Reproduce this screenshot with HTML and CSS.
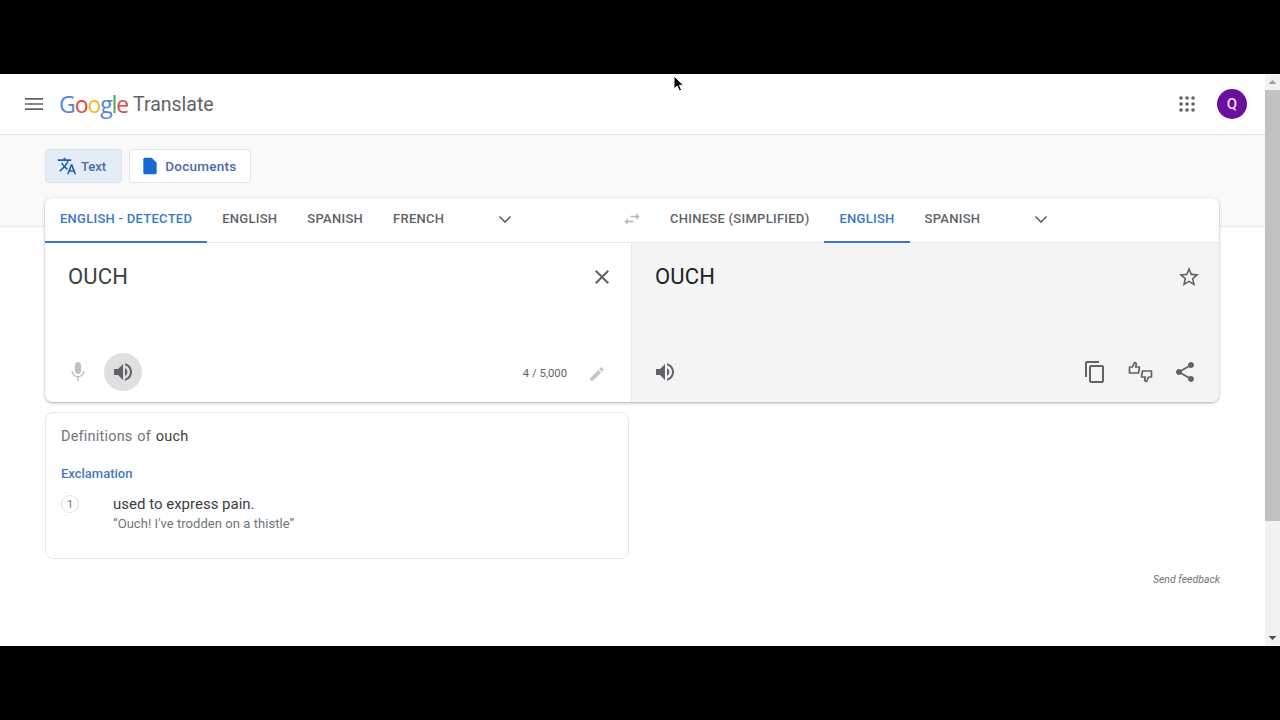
FILE: index.html
```html
<!DOCTYPE html>
<html lang="en">
<head>
<meta charset="utf-8">
<title>Google Translate</title>
<link rel="stylesheet" href="styles.css">
</head>
<body>
<div class="letterbox"></div>
<div class="viewport">
  <div class="page">
    <header class="topbar">
      <div class="brand">
        <svg class="menu" width="24" height="24" viewBox="0 0 24 24"><path d="M3 18h18v-1.700H3V18zm0-5.150h18v-1.700H3v1.700zM3 6v1.700h18V6H3z" fill="#5f6368"/></svg>
        <span class="logo"><span class="g-b">G</span><span class="g-r">o</span><span class="g-y">o</span><span class="g-b">g</span><span class="g-g">l</span><span class="g-r">e</span></span>
        <span class="product">Translate</span>
      </div>
      <div class="account">
        <svg width="24" height="24" viewBox="0 0 24 24" fill="#5f6368"><circle cx="6" cy="6" r="1.800"/><circle cx="12" cy="6" r="1.800"/><circle cx="18" cy="6" r="1.800"/><circle cx="6" cy="12" r="1.800"/><circle cx="12" cy="12" r="1.800"/><circle cx="18" cy="12" r="1.800"/><circle cx="6" cy="18" r="1.800"/><circle cx="12" cy="18" r="1.800"/><circle cx="18" cy="18" r="1.800"/></svg>
        <span class="avatar">Q</span>
      </div>
    </header>
    <main class="main">
      <nav class="modes">
        <button class="mode mode-on">
          <svg width="20" height="20" viewBox="0 0 24 24" fill="#1a5fb4"><path d="M12.87 15.07l-2.54-2.51.03-.03A17.52 17.52 0 0 0 14.07 6H17V4h-7V2H8v2H1v2h11.17C11.5 7.92 10.44 9.75 9 11.35 8.07 10.32 7.3 9.19 6.69 8h-2c.73 1.63 1.73 3.17 2.98 4.56l-5.09 5.02L4 19l5-5 3.11 3.11.76-2.04zM18.5 10h-2L12 22h2l1.12-3h4.75L21 22h2l-4.5-12zm-2.62 7l1.62-4.33L19.12 17h-3.24z"/></svg>
          Text
        </button>
        <button class="mode mode-doc">
          <svg width="20" height="20" viewBox="0 0 24 24" fill="#1967d2"><path d="M14 2H6c-1.1 0-2 .9-2 2v16c0 1.1.9 2 2 2h12c1.1 0 2-.9 2-2V8l-6-6z"/></svg>
          Documents
        </button>
      </nav>

      <section class="translator">
        <div class="tabs">
          <div class="tabset tabset-source">
            <span class="tab tab-on">ENGLISH - DETECTED</span>
            <span class="tab">ENGLISH</span>
            <span class="tab">SPANISH</span>
            <span class="tab">FRENCH</span>
            <svg class="chev chev-source" width="24" height="24" viewBox="0 0 24 24"><path d="M6.500 9.500L12 15l5.500-5.500" fill="none" stroke="#5f6368" stroke-width="1.600"/></svg>
          </div>
          <svg class="swap" width="20" height="20" viewBox="0 0 24 24" fill="#b4b6b8"><path d="M6.990 11L3 15l3.990 4v-3H14v-2H6.990v-3zM21 9l-3.990-4v3H10v2h7.010v3L21 9z"/></svg>
          <div class="tabset tabset-target">
            <span class="tab">CHINESE (SIMPLIFIED)</span>
            <span class="tab tab-on">ENGLISH</span>
            <span class="tab">SPANISH</span>
            <svg class="chev chev-target" width="24" height="24" viewBox="0 0 24 24"><path d="M6.500 9.500L12 15l5.500-5.500" fill="none" stroke="#5f6368" stroke-width="1.600"/></svg>
          </div>
        </div>
        <div class="panes">
          <div class="pane pane-source">
            <div class="pane-top">
              <span class="phrase phrase-source">OUCH</span>
              <svg class="clear" width="24" height="24" viewBox="0 0 24 24" fill="#5f6368"><path d="M19 6.410L17.590 5 12 10.590 6.410 5 5 6.410 10.590 12 5 17.590 6.410 19 12 13.410 17.590 19 19 17.590 13.410 12z"/></svg>
            </div>
            <div class="pane-bottom">
              <svg class="mic" width="24" height="24" viewBox="0 0 24 24" fill="#bdc1c6"><path d="M12 14c1.660 0 3-1.340 3-3V5c0-1.660-1.340-3-3-3S9 3.340 9 5v6c0 1.660 1.340 3 3 3z"/><path d="M17 11c0 2.760-2.240 5-5 5s-5-2.240-5-5H5.500c0 3.100 2.400 5.700 5.750 6.200V21h1.500v-3.800c3.350-.5 5.750-3.100 5.750-6.200H17z"/></svg>
              <span class="speak-on">
                <svg width="24" height="24" viewBox="0 0 24 24" fill="#5f6368"><path d="M3 9v6h4l5 5V4L7 9H3z"/><path d="M16.500 12A4.500 4.500 0 0 0 14 7.970v8.050A4.470 4.470 0 0 0 16.500 12z"/><path d="M14 3.230v2.060c2.890.86 5 3.540 5 6.710s-2.110 5.850-5 6.710v2.060c4.010-.91 7-4.490 7-8.770s-2.990-7.860-7-8.770z"/></svg>
              </span>
              <span class="counter">4 / 5,000</span>
              <svg class="pencil" width="18" height="18" viewBox="0 0 24 24" fill="#c4c6c8"><path d="M3 17.250V21h3.750L17.810 9.940l-3.750-3.750L3 17.250zM20.710 7.040a1 1 0 0 0 0-1.410l-2.340-2.340a1 1 0 0 0-1.410 0l-1.830 1.830 3.750 3.750 1.830-1.830z"/></svg>
            </div>
          </div>
          <div class="pane pane-target">
            <div class="pane-top">
              <span class="phrase">OUCH</span>
              <svg class="star" width="24" height="24" viewBox="0 0 24 24" fill="#5f6368"><path d="M22 9.240l-7.190-.620L12 2 9.190 8.630 2 9.240l5.460 4.730L5.820 21 12 17.270 18.180 21l-1.630-7.030L22 9.240zM12 15.400l-3.760 2.270 1-4.280-3.320-2.880 4.380-.380L12 6.100l1.710 4.040 4.380.380-3.320 2.880 1 4.280L12 15.400z"/></svg>
            </div>
            <div class="pane-bottom">
              <svg class="speak" width="24" height="24" viewBox="0 0 24 24" fill="#5f6368"><path d="M3 9v6h4l5 5V4L7 9H3z"/><path d="M16.500 12A4.500 4.500 0 0 0 14 7.970v8.050A4.470 4.470 0 0 0 16.500 12z"/><path d="M14 3.230v2.060c2.890.86 5 3.540 5 6.710s-2.110 5.850-5 6.710v2.060c4.010-.91 7-4.490 7-8.770s-2.990-7.860-7-8.770z"/></svg>
              <span class="actions">
                <svg width="24" height="24" viewBox="0 0 24 24" fill="#5f6368"><path d="M16 1H4c-1.100 0-2 .9-2 2v14h2V3h12V1zm3 4H8c-1.100 0-2 .9-2 2v14c0 1.100.9 2 2 2h11c1.100 0 2-.9 2-2V7c0-1.100-.9-2-2-2zm0 16H8V7h11v14z"/></svg>
                <svg width="26" height="26" viewBox="0 0 26 26" fill="none" stroke="#5f6368" stroke-width="1.700" stroke-linejoin="round"><path d="M2.500 14V8H5.500L7.500 3.500C9 3.500 9.500 4.500 9.200 5.800L8.700 8H12.500L11.500 14z"/><path d="M24.500 12V18H21.500L19.500 22.500C18 22.500 17.500 21.500 17.800 20.200L18.300 18H14.500L15.500 12z"/></svg>
                <svg width="24" height="24" viewBox="0 0 24 24" fill="#5f6368"><path d="M18 16.080c-.76 0-1.440.3-1.960.77L8.910 12.700c.05-.23.090-.46.090-.7s-.04-.47-.09-.7l7.050-4.110c.54.5 1.250.81 2.040.81 1.660 0 3-1.340 3-3s-1.340-3-3-3-3 1.340-3 3c0 .24.040.47.090.7L8.040 9.810C7.500 9.310 6.790 9 6 9c-1.660 0-3 1.340-3 3s1.340 3 3 3c.79 0 1.500-.31 2.040-.81l7.120 4.160c-.05.210-.08.430-.08.650 0 1.610 1.310 2.920 2.920 2.920s2.920-1.310 2.920-2.920-1.310-2.920-2.920-2.920z"/></svg>
              </span>
            </div>
          </div>
        </div>
      </section>

      <section class="definitions">
        <h2 class="def-title">Definitions of <span class="def-word">ouch</span></h2>
        <h3 class="def-pos">Exclamation</h3>
        <div class="def-row">
          <span class="def-num">1</span>
          <div>
            <p class="def-text">used to express pain.</p>
            <p class="def-example">“Ouch! I've trodden on a thistle”</p>
          </div>
        </div>
      </section>
      <div class="feedback">Send feedback</div>
    </main>
  </div>
  <div class="scrollbar">
    <svg width="15" height="16" viewBox="0 0 15 16"><path d="M3.500 10L7.500 6l4 4z" fill="#a0a0a0"/></svg>
    <div class="track"><div class="thumb"></div></div>
    <svg width="15" height="16" viewBox="0 0 15 16"><path d="M3.500 6L7.500 10l4-4z" fill="#505050"/></svg>
  </div>
  <svg class="cursor" width="12" height="18" viewBox="0 0 12 18"><path d="M1 1v13l3.200-3 2.200 5 2.200-1-2.200-4.800H10.500z" fill="#000" stroke="#fff" stroke-width="1"/></svg>
</div>
<div class="letterbox"></div>
</body>
</html>
```
FILE: styles.css
```css
* { box-sizing: border-box; }
html, body { margin: 0; height: 720px; overflow: hidden; }
body { font-family: Roboto, "Liberation Sans", sans-serif; background: #000; color: #3c4043; display: flex; flex-direction: column; }
.letterbox { height: 74px; background: #000; flex: none; }
.viewport { height: 572px; flex: none; display: flex; position: relative; background: #fff; }
.page { flex: 1; min-width: 0; display: flex; flex-direction: column; }
.cursor { position: absolute; left: 673px; top: 1px; }

.topbar { height: 61px; flex: none; border-bottom: 1px solid #e2e3e5; padding: 0 18px 0 22px; display: flex; align-items: center; justify-content: space-between; }
.brand { display: flex; align-items: center; }
.menu { margin-right: 13px; }
.logo { font-family: "Open Sans", sans-serif; font-size: 23px; font-weight: 500; letter-spacing: -1.100px; width: 74px; }
.g-b { color: #4f88e0; }
.g-r { color: #dc4a42; }
.g-y { color: #f0ba28; }
.g-g { color: #45a85a; }
.product { font-size: 19.500px; color: #5f6368; }
.account { display: flex; align-items: center; gap: 18px; }
.avatar { width: 30px; height: 30px; border-radius: 50%; background: #6a0f9c; color: #f1d9f7; font-size: 15px; font-weight: 500; display: flex; align-items: center; justify-content: center; }

.main { flex: 1; padding: 14px 45px 0; background: linear-gradient(#f9f9fa 91px, #e8eaed 91px, #e8eaed 92px, #fff 92px); }
.modes { display: flex; gap: 7px; height: 34px; margin-bottom: 15px; }
.mode { display: flex; align-items: center; gap: 4px; height: 34px; padding: 0 15px 0 11px; font: 500 13px Roboto, sans-serif; color: #4a6bab; background: #fff; border: 1px solid #e2e5e9; border-radius: 4px; }
.mode-on { background: #e4ecf6; border-color: #d8e1ec; }
.mode-doc { padding: 0 14px 0 10px; gap: 5px; font-size: 13.500px; letter-spacing: .25px; }

.translator { width: 1174px; height: 204px; background: #fff; border-radius: 8px; box-shadow: 0 1px 3px rgba(60, 64, 67, .45); overflow: hidden; display: flex; flex-direction: column; }
.tabs { height: 45px; flex: none; border-bottom: 1px solid #e8eaed; display: flex; align-items: stretch; position: relative; }
.tabset { display: flex; align-items: stretch; }
.tabset-source { width: 577px; }
.tabset-target { flex: 1; margin-left: 13px; }
.tab { padding: 0 15px 4px; font-size: 13px; font-weight: 500; letter-spacing: .27px; color: #5f6368; display: flex; align-items: center; height: 45px; }
.tab-on { color: #3a78c9; border-bottom: 2px solid #3a78c9; padding-bottom: 2px; }
.chev { align-self: center; margin-bottom: 3px; }
.chev-source { margin-left: 34px; }
.chev-target { margin-left: 34px; }
.swap { align-self: center; margin-bottom: 3px; }

.panes { flex: 1; display: flex; }
.pane { flex: 1; padding: 0 18px 0 23px; display: flex; flex-direction: column; justify-content: space-between; }
.pane-source { flex: none; width: 586px; }
.pane-target { background: #f4f4f5; border-left: 1px solid #e8eaed; }
.pane-top { display: flex; justify-content: space-between; align-items: center; padding-top: 11px; height: 46px; box-sizing: content-box; }
.phrase { font-size: 22px; line-height: 24px; color: #202124; letter-spacing: .15px; }
.phrase-source { color: #3c4043; }
.clear { margin-right: -1px; }
.pane-bottom { display: flex; align-items: center; height: 38px; margin-bottom: 11px; }
.mic { margin-left: -2px; }
.speak-on { width: 38px; height: 38px; border-radius: 50%; background: #dfdfdf; display: flex; align-items: center; justify-content: center; margin-left: 14px; }
.counter { font-size: 11.300px; color: #5f6368; margin-left: auto; margin-right: 21px; margin-top: 3px; }
.pencil { margin-right: 7px; margin-top: 3px; }
.speak { margin-left: -2px; }
.actions { margin-left: auto; display: flex; align-items: center; gap: 20px; margin-right: 4px; }

.definitions { width: 584px; height: 147px; margin-top: 10px; background: #fff; border: 1px solid #e6e7e9; border-radius: 8px; padding: 15px 15px 0; }
.def-title { margin: 0; font: 400 14.500px/18px Roboto, sans-serif; letter-spacing: .2px; word-spacing: 1px; color: #70757a; }
.def-word { color: #3c4043; }
.def-pos { margin: 20px 0 0; font: 500 13px/16px Roboto, sans-serif; color: #4a78c2; }
.def-row { display: flex; margin-top: 12px; }
.def-num { width: 18px; height: 18px; flex: none; margin-right: 34px; margin-top: 1px; border: 1px solid #e0e1e3; border-radius: 50%; font-size: 11px; color: #70757a; display: flex; align-items: center; justify-content: center; }
.def-text { margin: 0; font-size: 15px; line-height: 20px; color: #3c4043; }
.def-example { margin: 0; font-size: 13px; line-height: 20px; letter-spacing: .05px; color: #70757a; }
.feedback { width: 1175px; margin-top: 14px; text-align: right; font-size: 10.500px; font-style: italic; color: #70757a; }

.scrollbar { width: 15px; flex: none; background: #f1f1f1; display: flex; flex-direction: column; }
.track { flex: 1; }
.thumb { height: 431px; background: #c1c1c1; }
```
